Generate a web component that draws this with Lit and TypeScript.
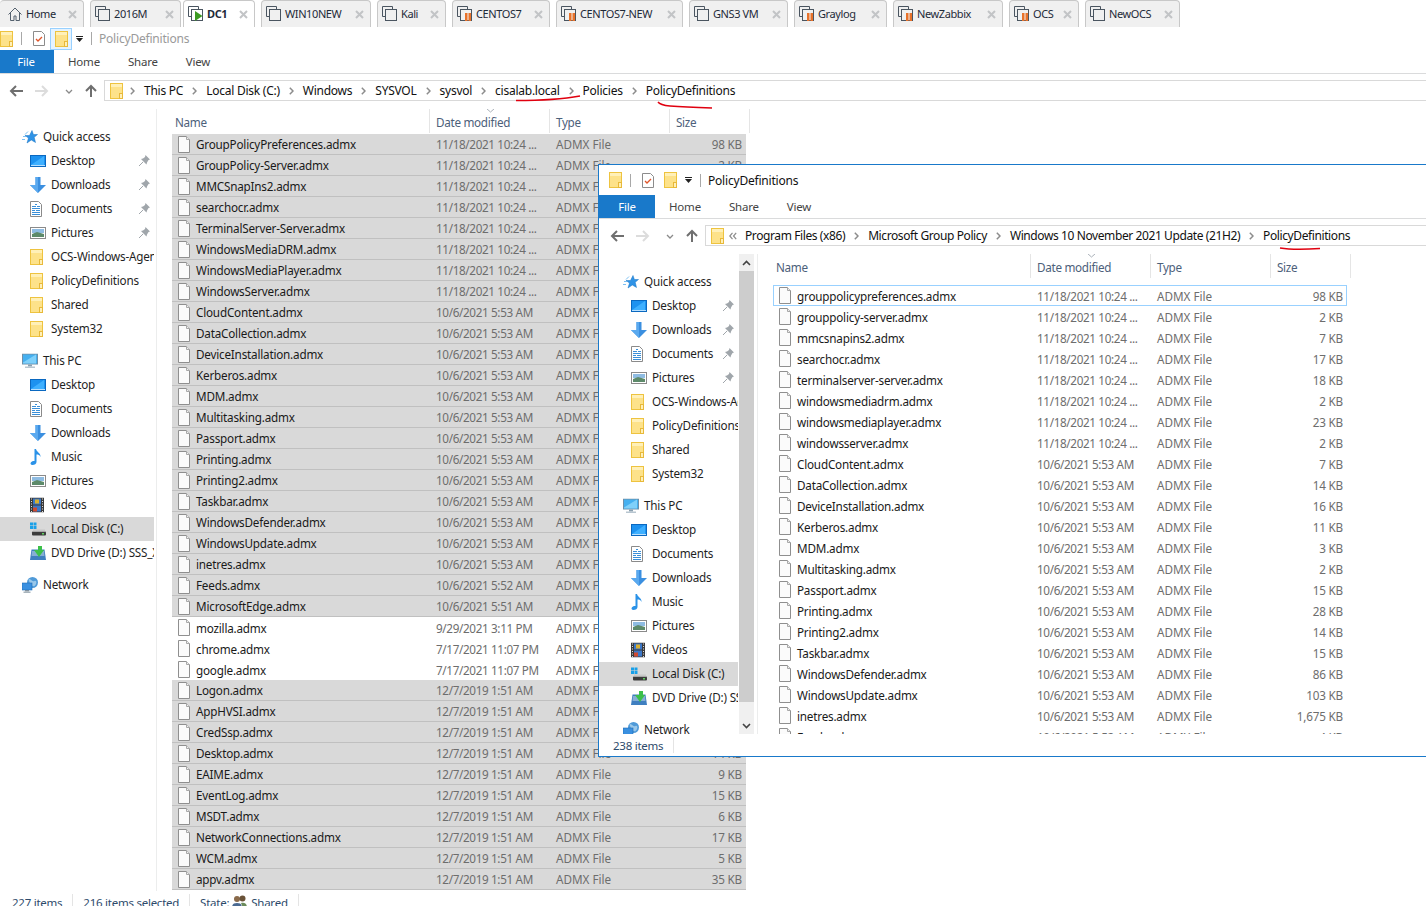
import { LitElement, html, css, svg } from 'lit';
import { customElement, property } from 'lit/decorators.js';

const OLD = '11/18/2021 10:24 ...';
const OCT = '10/6/2021 5:53 AM';
const DEC = '12/7/2019 1:51 AM';

type Row = [string, string, string, boolean?];

const backRows: Row[] = [
  ['GroupPolicyPreferences.admx', OLD, '98 KB', true],
  ['GroupPolicy-Server.admx', OLD, '2 KB', true],
  ['MMCSnapIns2.admx', OLD, '7 KB', true],
  ['searchocr.admx', OLD, '17 KB', true],
  ['TerminalServer-Server.admx', OLD, '18 KB', true],
  ['WindowsMediaDRM.admx', OLD, '2 KB', true],
  ['WindowsMediaPlayer.admx', OLD, '23 KB', true],
  ['WindowsServer.admx', OLD, '2 KB', true],
  ['CloudContent.admx', OCT, '7 KB', true],
  ['DataCollection.admx', OCT, '14 KB', true],
  ['DeviceInstallation.admx', OCT, '16 KB', true],
  ['Kerberos.admx', OCT, '11 KB', true],
  ['MDM.admx', OCT, '3 KB', true],
  ['Multitasking.admx', OCT, '2 KB', true],
  ['Passport.admx', OCT, '15 KB', true],
  ['Printing.admx', OCT, '28 KB', true],
  ['Printing2.admx', OCT, '14 KB', true],
  ['Taskbar.admx', OCT, '15 KB', true],
  ['WindowsDefender.admx', OCT, '86 KB', true],
  ['WindowsUpdate.admx', OCT, '103 KB', true],
  ['inetres.admx', OCT, '1,675 KB', true],
  ['Feeds.admx', '10/6/2021 5:52 AM', '4 KB', true],
  ['MicrosoftEdge.admx', '10/6/2021 5:51 AM', '500 KB', true],
  ['mozilla.admx', '9/29/2021 3:11 PM', '16 KB'],
  ['chrome.admx', '7/17/2021 11:07 PM', '600 KB'],
  ['google.admx', '7/17/2021 11:07 PM', '2 KB'],
  ['Logon.admx', DEC, '22 KB', true],
  ['AppHVSI.admx', DEC, '8 KB', true],
  ['CredSsp.admx', DEC, '18 KB', true],
  ['Desktop.admx', DEC, '14 KB', true],
  ['EAIME.admx', DEC, '9 KB', true],
  ['EventLog.admx', DEC, '15 KB', true],
  ['MSDT.admx', DEC, '6 KB', true],
  ['NetworkConnections.admx', DEC, '17 KB', true],
  ['WCM.admx', DEC, '5 KB', true],
  ['appv.admx', DEC, '35 KB', true],
];

const frontRows: Row[] = [
  ['grouppolicypreferences.admx', OLD, '98 KB'],
  ['grouppolicy-server.admx', OLD, '2 KB'],
  ['mmcsnapins2.admx', OLD, '7 KB'],
  ['searchocr.admx', OLD, '17 KB'],
  ['terminalserver-server.admx', OLD, '18 KB'],
  ['windowsmediadrm.admx', OLD, '2 KB'],
  ['windowsmediaplayer.admx', OLD, '23 KB'],
  ['windowsserver.admx', OLD, '2 KB'],
  ['CloudContent.admx', OCT, '7 KB'],
  ['DataCollection.admx', OCT, '14 KB'],
  ['DeviceInstallation.admx', OCT, '16 KB'],
  ['Kerberos.admx', OCT, '11 KB'],
  ['MDM.admx', OCT, '3 KB'],
  ['Multitasking.admx', OCT, '2 KB'],
  ['Passport.admx', OCT, '15 KB'],
  ['Printing.admx', OCT, '28 KB'],
  ['Printing2.admx', OCT, '14 KB'],
  ['Taskbar.admx', OCT, '15 KB'],
  ['WindowsDefender.admx', OCT, '86 KB'],
  ['WindowsUpdate.admx', OCT, '103 KB'],
  ['inetres.admx', OCT, '1,675 KB'],
  ['Feeds.admx', '10/6/2021 5:52 AM', '4 KB'],
];

// tab: label, width, icon state
const tabs: [string, number, string][] = [
  ['Home', 84, 'home'],
  ['2016M', 91, 'vm'],
  ['DC1', 72, 'play'],
  ['WIN10NEW', 110, 'vm'],
  ['Kali', 69, 'vm'],
  ['CENTOS7', 98, 'pause'],
  ['CENTOS7-NEW', 127, 'pause'],
  ['GNS3 VM', 99, 'vm'],
  ['Graylog', 93, 'pause'],
  ['NewZabbix', 110, 'pause'],
  ['OCS', 70, 'pause'],
  ['NewOCS', 95, 'vm'],
];

const folder = svg`<svg class="ic" width="13" height="16" viewBox="0 0 13 16"><rect x=".5" y=".5" width="12" height="15" fill="#fde28a" stroke="#eec33f"/><rect x="1" y="1" width="11" height="3" fill="#fff0b8"/><rect x="9.5" y="10.5" width="3" height="5" fill="#fff0b8" stroke="#e8b93a"/></svg>`;
const fileIcon = svg`<svg class="ic" width="12" height="17" viewBox="0 0 12 17"><path d="M.5.500h8l3 3v13H.5z" fill="#fbfbfb" stroke="#8f8f8f"/><path d="M8.500.500v3h3" fill="#eee" stroke="#a8a8a8"/></svg>`;
const star = svg`<svg class="ic" width="16" height="15" viewBox="0 0 16 15"><path d="M10 1l1.400 4h4.100l-3.300 2.800 1.300 5.200-4.200-2.500L5 13.500l1.500-5L3 6h4.500z" fill="#2f93e6" stroke="#1b74c4" stroke-width=".5"/><path d="M0 10h3M1 7h3M6 2L3 5" stroke="#7cc0f2"/></svg>`;
const desktop = svg`<svg class="ic" width="16" height="12" viewBox="0 0 16 12"><rect x=".5" y=".5" width="15" height="11" fill="#1d92f0" stroke="#0a68c0"/><path d="M1 10L14 1v9z" fill="#3fb0ff"/><path d="M1 10.500h14" stroke="#b8e0ff"/></svg>`;
const downloads = svg`<svg class="ic" width="16" height="16" viewBox="0 0 16 16"><path d="M5.500 0h5v8H16l-8 8-8-8h5.500z" fill="#3b8fe0"/><path d="M5.500 0H8v16L0 8h5.500z" fill="#5aa9ef"/></svg>`;
const docs = svg`<svg class="ic" width="12" height="16" viewBox="0 0 12 16"><path d="M.5.500h8l3 3v12H.5z" fill="#fff" stroke="#8a8a8a"/><path d="M5 3.500h2M2 5.500h4M7 5.500h3M2 7.500h8M2 9.500h3M6 9.500h4M2 11.500h8M2 13.500h8" stroke="#3a8fd8"/></svg>`;
const pics = svg`<svg class="ic" width="16" height="12" viewBox="0 0 16 12"><rect x=".5" y=".5" width="15" height="11" fill="#fff" stroke="#8a8a8a"/><rect x="2" y="2" width="12" height="4" fill="#8fbce2"/><path d="M2 7l5-2 7 2v3H2z" fill="#5d8a6a"/></svg>`;
const pin = svg`<svg class="pin" width="11" height="11" viewBox="0 0 11 11"><path d="M6.500 0L11 4.500 9.500 5 8 7.500 7.500 9.500 2 4 4 3.500 6 2z" fill="#a0a6ab"/><path d="M4 7L0 11" stroke="#a0a6ab"/></svg>`;
const music = svg`<svg class="ic" width="12" height="16" viewBox="0 0 12 16"><path d="M4.500 0H6c.5 3 5 4 4.500 8C10 6 8 5.500 6.500 5.500V13c0 2-2 3-4 3S0 14.500 1 13.300s2.500-1.500 3.500-1.300z" fill="#2a92e8"/></svg>`;
const video = svg`<svg class="ic" width="14" height="15" viewBox="0 0 14 15"><rect width="14" height="15" fill="#3a3a3a"/><rect x="3" y="1" width="8" height="6" fill="#3c78c8"/><rect x="5" y="2" width="4" height="4" fill="#d8b030"/><rect x="3" y="8" width="8" height="6" fill="#3c78c8"/><rect x="3" y="10" width="4" height="4" fill="#d04a30"/><path d="M1 1.500h1M1 4h1M1 6.500h1M1 9h1M1 11.500h1M1 14h1M12 1.500h1M12 4h1M12 6.500h1M12 9h1M12 11.500h1M12 14h1" stroke="#ddd"/></svg>`;
const disk = svg`<svg class="ic" width="16" height="15" viewBox="0 0 16 15"><path d="M0 1h3v3H0zM3.500 1h3v3h-3zM0 4.500h3v3H0zM3.500 4.500h3v3h-3z" fill="#19a0e8"/><rect x="2" y="10" width="14" height="4" rx="1" fill="#3c3c3c"/><rect x="3" y="8" width="12" height="2" fill="#c8c8c8"/><rect x="12" y="11.500" width="2" height="1.500" fill="#5fd05f"/></svg>`;
const dvd = svg`<svg class="ic" width="16" height="14" viewBox="0 0 16 14"><path d="M1.500 3.500h13L16 14H0z" fill="#3f7fc0"/><path d="M2 5h12l.5 5h-13z" fill="#86aed4"/><path d="M8 0h4v4h2L9 11 4 4h4z" fill="#3cc04a"/></svg>`;
const pc = svg`<svg class="ic" width="16" height="15" viewBox="0 0 16 15"><rect x=".5" y=".5" width="15" height="10" fill="#45b0f0" stroke="#6f8fa8"/><path d="M1 9L14 1v9H1z" fill="#7fd0fa"/><rect x="6" y="11" width="4" height="2" fill="#8aa0b0"/><rect x="3" y="13" width="10" height="1.500" fill="#b8c6d0"/></svg>`;
const network = svg`<svg class="ic" width="17" height="16" viewBox="0 0 17 16"><circle cx="10.500" cy="5.500" r="5.500" fill="#4f9ad8"/><path d="M6.500 2c3 0 3 3 6 2s2 4 0 5-5-2-6-7z" fill="#9ac8ea"/><rect y="6" width="10" height="7" fill="#3a90e0" stroke="#1e6cb4" stroke-width=".6"/><rect x="3" y="13" width="4" height="1.500" fill="#7f8f9c"/><rect x="1.500" y="14.500" width="7" height="1.500" fill="#a8b4bc"/></svg>`;

const navIcons: Record<string, unknown> = { desktop, downloads, docs, pics, music, video, disk, dvd, folder };

type Nav = [string, string, boolean?];
const quick: Nav[] = [
  ['Desktop', 'desktop', true],
  ['Downloads', 'downloads', true],
  ['Documents', 'docs', true],
  ['Pictures', 'pics', true],
  ['OCS-Windows-Agent', 'folder'],
  ['PolicyDefinitions', 'folder'],
  ['Shared', 'folder'],
  ['System32', 'folder'],
];
const thisPc: Nav[] = [
  ['Desktop', 'desktop'],
  ['Documents', 'docs'],
  ['Downloads', 'downloads'],
  ['Music', 'music'],
  ['Pictures', 'pics'],
  ['Videos', 'video'],
  ['Local Disk (C:)', 'disk'],
  ['DVD Drive (D:) SSS_X64FRE_EN-US', 'dvd'],
];

@customElement('explorer-window')
export class ExplorerWindow extends LitElement {
  static styles = css`
    :host {
      display: flex;
      flex-direction: column;
      background: #fff;
      font: 11.7px 'Noto Sans', sans-serif;
      letter-spacing: -0.2px;
      color: #1f1f1f;
      overflow: hidden;
    }
    .ic { flex: none; display: block; }
    .qat { display: flex; align-items: center; height: 30px; padding-left: 10px; flex: none; color: #111; font-size: 12px; }
    :host(.back) .qat { height: 23px; padding-left: 2px; color: #9a9a9a; }
    .qat .sep { width: 1px; height: 13px; background: #a8a8a8; margin: 0 11px 0 8px; }
    .qat .sep.two { margin: 0 7px 0 8px; }
    .qat .slot { display: flex; flex: none; width: 13px; margin-left: 10px; justify-content: center; }
    :host(.back) .qat .slot { box-sizing: border-box; width: 22px; height: 22px; margin-left: 5px; align-items: center; background: #e5f3ff; border: 1px solid #99d1ff; }
    .drop { margin-left: 8px; flex: none; }
    :host(.back) .drop { margin-left: 4px; }
    .ribbon { display: flex; height: 23px; flex: none; align-items: center; border-bottom: 1px solid #dadbdc; color: #444; font-size: 11.5px; }
    .ribbon .file { width: 56px; height: 100%; background: #1979ca; color: #fff; display: flex; align-items: center; justify-content: center; margin-right: 14px; }
    .ribbon span { margin-right: 28px; }
    .addr { display: flex; align-items: flex-start; height: 35px; flex: none; box-sizing: border-box; padding-top: 6px; }
    .navbtns { width: 106px; height: 21px; flex: none; }
    .crumbs { flex: 1; height: 21px; box-sizing: border-box; border: 1px solid #d9d9d9; border-right: 0; display: flex; align-items: center; padding-left: 5px; color: #111; white-space: nowrap; font-size: 12px; letter-spacing: -0.25px; }
    :host(.front) .crumbs { letter-spacing: -0.4px; }
    .crumbs .arr { margin: 0 9px; flex: none; }
    .crumbs .arr.first { margin-left: 7px; }
    .crumbs .lead { margin: 0 8px 0 5px; flex: none; }
    .body { flex: 1; min-height: 0; display: flex; }
    .pane { width: 159px; flex: none; display: flex; overflow: hidden; border-right: 1px solid #eceded; box-sizing: border-box; }
    .nav { flex: 1; min-width: 0; overflow: hidden; padding-top: 16px; box-sizing: border-box; }
    :host(.back) .nav { margin-right: 2px; }
    .group { margin-bottom: 8px; }
    .item { height: 24px; box-sizing: border-box; padding: 0 0 2px 32px; display: flex; align-items: center; white-space: nowrap; position: relative; overflow: hidden; }
    .item.top { padding-left: 24px; }
    .item .ic { position: absolute; left: 32px; top: 50%; transform: translateY(-50%); }
    .item.top .ic { left: 24px; }
    .item span { margin-left: 21px; }
    .item.sel { background: #d9d9d9; }
    .pin { position: absolute; right: 4px; top: 6px; }
    .bar { width: 15px; flex: none; background: #f0f0f0; margin: 0 3px 0 1px; display: flex; flex-direction: column; align-items: center; }
    .bar .end { height: 17px; display: flex; align-items: center; justify-content: center; flex: none; }
    .bar .thumb { width: 100%; height: 431px; background: #cdcdcd; }
    .bar .rest { flex: 1; }
    .list { flex: 1; min-width: 0; overflow: hidden; padding-left: 15px; }
    .head { display: grid; grid-template-columns: 258px 120px 120px 80px; width: 578px; height: 24px; position: relative; color: #4c607a; letter-spacing: -0.3px; }
    .head div { display: flex; align-items: center; border-right: 1px solid #e5e5e5; padding: 1px 0 0 6px; box-sizing: border-box; }
    .head div:first-child { padding-left: 3px; }
    .sort { position: absolute; left: 314px; top: -1px; }
    .rows { width: 574px; margin-top: 1px; }
    :host(.front) .rows { margin-top: 7px; }
    .row { display: grid; grid-template-columns: 258px 120px 120px 76px; height: 21px; align-items: center; box-sizing: border-box; white-space: nowrap; }
    .row.sel { background: #d9d9d9; border-bottom: 1px solid #c0c0c0; }
    .row.focus { outline: 1px solid #99d1ff; outline-offset: -1px; }
    .row .name { display: flex; align-items: center; padding-left: 6px; gap: 6px; color: #1a1a1a; }
    .row .muted { padding-left: 6px; color: #6d6d6d; letter-spacing: 0; }
    .row .date { letter-spacing: -0.35px; }
    .row .size { text-align: right; padding-right: 4px; color: #6d6d6d; }
    .status { height: 22px; flex: none; display: flex; align-items: center; padding-left: 14px; color: #2d4a6b; white-space: nowrap; font-size: 11.5px; letter-spacing: -0.25px; }
    .status span { display: flex; align-items: center; gap: 3px; padding-right: 10px; margin-right: 10px; border-right: 1px solid #e4e4e4; height: 16px; }
    .status svg { margin-right: 1px; }
  `;

  @property({ type: Array }) path: string[] = [];
  @property({ type: Array }) rows: Row[] = [];
  @property({ type: Boolean }) lead = false;
  @property({ type: Boolean }) front = false;

  private navItem(n: Nav, sel = false) {
    return html`<div class="item ${sel ? 'sel' : ''}">
      ${navIcons[n[1]]}<span>${n[0]}</span>${n[2] ? pin : ''}
    </div>`;
  }

  private chevron(first = false) {
    return svg`<svg class="arr ${first ? 'first' : ''}" width="5" height="8" viewBox="0 0 5 8"><path d="M.8.800L4 4 .8 7.200" fill="none" stroke="#8c8c8c" stroke-width="1.500"/></svg>`;
  }

  render() {
    return html`
      <div class="qat">
        ${folder}
        <div class="sep"></div>
        <svg class="ic" width="12" height="15" viewBox="0 0 12 15"><path d="M.5.500h8l3 3v11H.5z" fill="#fff" stroke="#8c8c8c"/><path d="M3 8l2 2 4-4" fill="none" stroke="#e0552a" stroke-width="1.300"/></svg>
        <div class="slot">${folder}</div>
        <svg class="drop" width="7" height="6" viewBox="0 0 7 6"><path d="M0 0h7v1H0zM0 2h7L3.500 6z" fill="#222"/></svg>
        <div class="sep two"></div>
        <div>PolicyDefinitions</div>
      </div>
      <div class="ribbon">
        <div class="file">File</div>
        <span>Home</span><span>Share</span><span>View</span>
      </div>
      <div class="addr">
        <svg class="navbtns" viewBox="0 0 106 21">
          <path d="M13 11h12M18 6l-5 5 5 5" fill="none" stroke="#6f6f6f" stroke-width="2"/>
          <path d="M49 11H37M44 6l5 5-5 5" fill="none" stroke="#dcdcdc" stroke-width="2"/>
          <path d="M68 10l3 3 3-3" fill="none" stroke="#8a8a8a" stroke-width="1.300"/>
          <path d="M93 17V6M88 11l5-5 5 5" fill="none" stroke="#6f6f6f" stroke-width="2"/>
        </svg>
        <div class="crumbs">
          ${folder}
          ${this.lead
            ? svg`<svg class="lead" width="8" height="8" viewBox="0 0 8 8"><path d="M3.500.800L.8 4l2.700 3.200M7.200.800L4.500 4l2.700 3.200" fill="none" stroke="#8c8c8c" stroke-width="1.200"/></svg>`
            : this.chevron(true)}
          ${this.path.map((p, i) => html`${i ? this.chevron() : ''}<span>${p}</span>`)}
        </div>
      </div>
      <div class="body">
        <div class="pane">
          <div class="nav">
            <div class="group">
              <div class="item top">${star}<span>Quick access</span></div>
              ${quick.map((n) => this.navItem(n))}
            </div>
            <div class="group">
              <div class="item top">${pc}<span>This PC</span></div>
              ${thisPc.map((n) => this.navItem(n, n[0].startsWith('Local')))}
            </div>
            <div class="group">
              <div class="item top">${network}<span>Network</span></div>
            </div>
          </div>
          ${this.front
            ? html`<div class="bar">
                <div class="end"><svg width="9" height="6" viewBox="0 0 9 6"><path d="M1 5l3.500-3.500L8 5" fill="none" stroke="#444" stroke-width="1.600"/></svg></div>
                <div class="thumb"></div>
                <div class="rest"></div>
                <div class="end"><svg width="9" height="6" viewBox="0 0 9 6"><path d="M1 1l3.500 3.500L8 1" fill="none" stroke="#444" stroke-width="1.600"/></svg></div>
              </div>`
            : ''}
        </div>
        <div class="list">
          <div class="head">
            <div>Name</div><div>Date modified</div><div>Type</div><div>Size</div>
            <svg class="sort" width="9" height="5" viewBox="0 0 9 5"><path d="M.5.500l4 3.500 4-3.500" fill="none" stroke="#a9b0b8"/></svg>
          </div>
          <div class="rows">
            ${this.rows.map(
              (r, i) => html`<div class="row ${r[3] ? 'sel' : ''} ${this.front && i === 0 ? 'focus' : ''}">
                <div class="name">${fileIcon}<span>${r[0]}</span></div>
                <div class="muted date">${r[1]}</div>
                <div class="muted">ADMX File</div>
                <div class="size">${r[2]}</div>
              </div>`
            )}
          </div>
        </div>
      </div>
      <div class="status">
        ${this.front
          ? html`<span>238 items</span>`
          : html`<span>227 items</span><span>216 items selected</span>
              <span>State:
                <svg width="15" height="14" viewBox="0 0 15 14"><circle cx="5" cy="4" r="3" fill="#8a6a4a"/><circle cx="10.500" cy="3.500" r="3" fill="#6a5238"/><path d="M0 13c0-4 2-5 5-5s5 1 5 5z" fill="#4a6a92"/><path d="M9 8c3-1 6 0 6 5h-4z" fill="#6a8a5a"/></svg>
                Shared</span>`}
      </div>
    `;
  }
}

@customElement('app-root')
export class AppRoot extends LitElement {
  static styles = css`
    :host {
      display: block;
      position: relative;
      width: 1426px;
      height: 906px;
      overflow: hidden;
      background: #fff;
    }
    .tabs { display: flex; gap: 6px; height: 27px; background: #fff; font: 11px 'Noto Sans', sans-serif; letter-spacing: -0.4px; color: #1e2a38; }
    .tab { box-sizing: border-box; height: 27px; flex: none; display: flex; align-items: center; padding: 0 6px 1px 4px; gap: 4px; background: #f0f0f0; border: 1px solid #c8c8c8; border-bottom: 0; border-radius: 4px 4px 0 0; white-space: nowrap; }
    .tab:first-child { border-left: 0; padding-left: 8px; }
    .tab:nth-child(2) { margin-right: -4px; }
    .tab.on { background: #fff; font-weight: 700; }
    .tab .label { flex: 1; }
    .tab .x { flex: none; margin-top: 1px; }
    .back { margin-left: -2px; width: 1428px; height: 886px; }
    .front {
      position: absolute;
      left: 598px;
      top: 164px;
      width: 840px;
      height: 593px;
      box-sizing: border-box;
      border: 1px solid #1979ca;
      border-right: 0;
    }
    .ink { position: absolute; left: 0; top: 0; pointer-events: none; }
  `;

  render() {
    return html`
      <div class="tabs">
        ${tabs.map(
          ([label, width, icon]) => html`<div class="tab ${label === 'DC1' ? 'on' : ''}" style="width:${width}px">
            ${this.tabIcon(icon)}
            <span class="label">${label}</span>
            <svg class="x" width="9" height="9" viewBox="0 0 9 9"><path d="M1 1l7 7M8 1L1 8" stroke="#c2c4c6" stroke-width="2"/></svg>
          </div>`
        )}
      </div>
      <explorer-window
        class="back"
        .rows=${backRows}
        .path=${['This PC', 'Local Disk (C:)', 'Windows', 'SYSVOL', 'sysvol', 'cisalab.local', 'Policies', 'PolicyDefinitions']}
      ></explorer-window>
      <explorer-window
        class="front"
        front
        lead
        .rows=${frontRows}
        .path=${['Program Files (x86)', 'Microsoft Group Policy', 'Windows 10 November 2021 Update (21H2)', 'PolicyDefinitions']}
      ></explorer-window>
      <svg class="ink" width="1426" height="906" fill="none" stroke="#e0000f" stroke-width="1.400">
        <path d="M516 100.500c20 0 45-1 64-4.500" />
        <path d="M658 102c2 3 6 3.500 12 4 14 1 28 1.500 42 2" />
        <path d="M1280 248c12 2 26 1.500 40 .5" />
      </svg>
    `;
  }

  private tabIcon(kind: string) {
    if (kind === 'home') {
      return html`<svg width="14" height="14" viewBox="0 0 14 14" fill="none" stroke="#54616e"><path d="M.5 7.500L7 1l6.500 6.500M2.500 6v7.500H6V9h2v4.500h3.500V6"/></svg>`;
    }
    return html`<svg width="15" height="15" viewBox="0 0 15 15" fill="none" stroke="#4a5560">
      <path d="M3.500 10.500H.5V.5h10v3"/>
      <rect x="3.500" y="3.500" width="11" height="11"/>
      ${kind === 'play' ? svg`<path d="M7 5l7.500 5L7 15z" fill="#3c9a22" stroke="none"/>` : ''}
      ${kind === 'pause' ? svg`<path d="M8 7h2.500v8H8zM11.500 7H14v8h-2.500z" fill="#e8722a" stroke="none"/>` : ''}
    </svg>`;
  }
}
